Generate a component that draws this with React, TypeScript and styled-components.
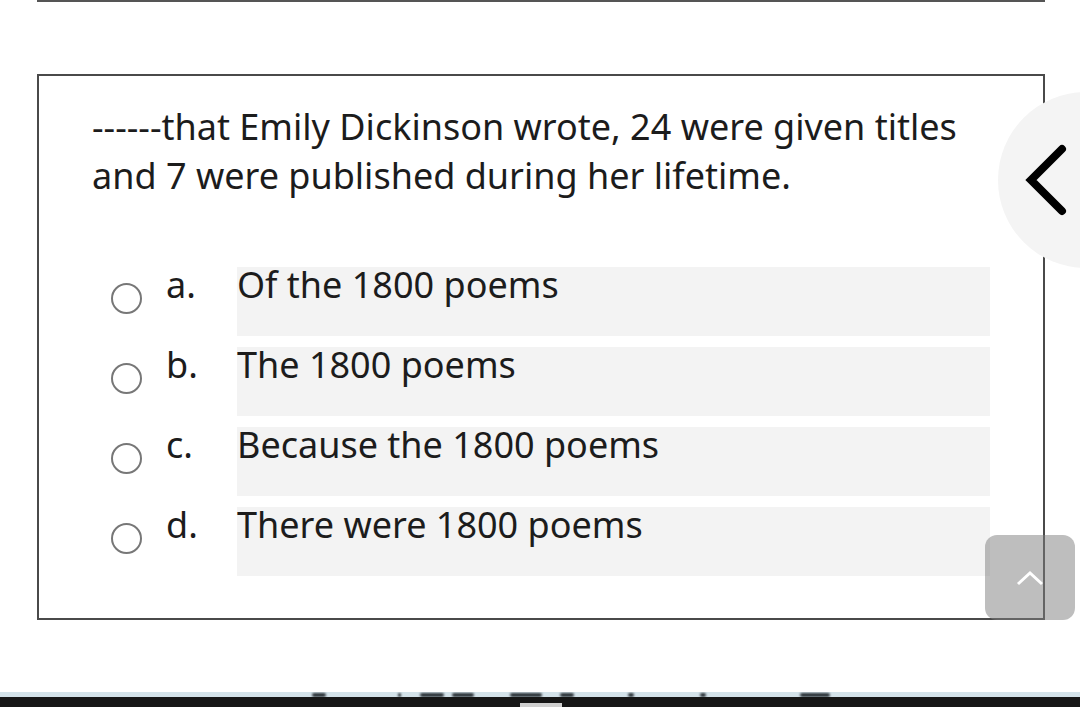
import React from "react";
import styled, { createGlobalStyle } from "styled-components";

const Global = createGlobalStyle`
  html, body { margin: 0; padding: 0; background: #ffffff; }
  body { font-family: "Noto Sans", "Open Sans", sans-serif; color: #1b1b1b; }
`;

const Page = styled.div`
  position: relative;
  width: 1080px;
  height: 707px;
  overflow: hidden;
  display: flex;
  flex-direction: column;
`;

const TopRule = styled.div`
  margin: 0 35px 0 37px;
  height: 2px;
  background: #555555;
`;

const Card = styled.section`
  margin: 72px 35px 0 37px;
  border: 2px solid #4a4a4a;
  padding: 26px 53px 42px 53px;
  display: flex;
  flex-direction: column;
`;

const Question = styled.p`
  margin: 0;
  font-size: 36px;
  line-height: 49px;
  font-weight: 400;
  color: #1c1c1c;
  white-space: nowrap;
`;

const Options = styled.div`
  margin-top: 67px;
  display: flex;
  flex-direction: column;
  gap: 11px;
`;

const Row = styled.label`
  display: grid;
  grid-template-columns: 74px 71px 1fr;
  align-items: start;
  height: 69px;
`;

const Radio = styled.span`
  box-sizing: border-box;
  width: 31px;
  height: 31px;
  margin: 16px 0 0 19px;
  border-radius: 50%;
  border: 2px solid #777777;
  background: #ffffff;
`;

const Letter = styled.span`
  font-size: 36px;
  line-height: 36px;
  color: #1c1c1c;
`;

const Answer = styled.span`
  height: 69px;
  background: #f3f3f3;
  font-size: 36px;
  line-height: 36px;
  color: #1c1c1c;
  white-space: nowrap;
`;

const SideCircle = styled.div`
  position: absolute;
  left: 998px;
  top: 92px;
  width: 176px;
  height: 176px;
  border-radius: 50%;
  background: #f4f4f4;
  display: flex;
  align-items: center;
  padding-left: 26px;
  box-sizing: border-box;
`;

const ScrollTop = styled.button`
  position: absolute;
  left: 985px;
  top: 535px;
  width: 90px;
  height: 85px;
  border: none;
  border-radius: 12px;
  background: rgba(125, 125, 125, 0.5);
  display: flex;
  align-items: center;
  justify-content: center;
  padding: 0;
`;

const BottomBar = styled.div`
  position: absolute;
  left: 0;
  right: 0;
  bottom: 0;
  height: 15px;
  display: flex;
  flex-direction: column;
`;

const BlueStrip = styled.div`
  height: 5px;
  background: #d3e2e9;
  position: relative;
  overflow: hidden;
`;

const Blob = styled.span<{ $l: number; $w: number }>`
  position: absolute;
  left: ${(p) => p.$l}px;
  width: ${(p) => p.$w}px;
  top: 1px;
  height: 4px;
  background: #2a3136;
  filter: blur(1px);
  border-radius: 2px;
`;

const BlackBar = styled.div`
  flex: 1;
  background: #161616;
  position: relative;
`;

const Handle = styled.span`
  position: absolute;
  left: 520px;
  top: 6px;
  width: 42px;
  height: 4px;
  background: #cfcfcf;
`;

const options = [
  { l: "a.", t: "Of the 1800 poems" },
  { l: "b.", t: "The 1800 poems" },
  { l: "c.", t: "Because the 1800 poems" },
  { l: "d.", t: "There were 1800 poems" },
];

const blobs = [
  [312, 14],
  [398, 3],
  [420, 24],
  [452, 22],
  [510, 32],
  [560, 14],
  [628, 6],
  [700, 6],
  [800, 30],
];

export default function App() {
  return (
    <Page>
      <Global />
      <TopRule />
      <Card>
        <Question>
          ------that Emily Dickinson wrote, 24 were given titles
          <br />
          and 7 were published during her lifetime.
        </Question>
        <Options>
          {options.map((o) => (
            <Row key={o.l}>
              <Radio />
              <Letter>{o.l}</Letter>
              <Answer>{o.t}</Answer>
            </Row>
          ))}
        </Options>
      </Card>
      <SideCircle>
        <svg width="50" height="74" viewBox="0 0 50 74">
          <polyline
            points="38,6 7,37 38,68"
            fill="none"
            stroke="#000"
            strokeWidth="8"
            strokeLinecap="round"
            strokeLinejoin="miter"
          />
        </svg>
      </SideCircle>
      <ScrollTop aria-label="Back to top">
        <svg width="30" height="20" viewBox="0 0 30 20">
          <polyline
            points="3,16 15,5 27,16"
            fill="none"
            stroke="#ffffff"
            strokeWidth="3"
          />
        </svg>
      </ScrollTop>
      <BottomBar>
        <BlueStrip>
          {blobs.map(([l, w], i) => (
            <Blob key={i} $l={l} $w={w} />
          ))}
        </BlueStrip>
        <BlackBar>
          <Handle />
        </BlackBar>
      </BottomBar>
    </Page>
  );
}
